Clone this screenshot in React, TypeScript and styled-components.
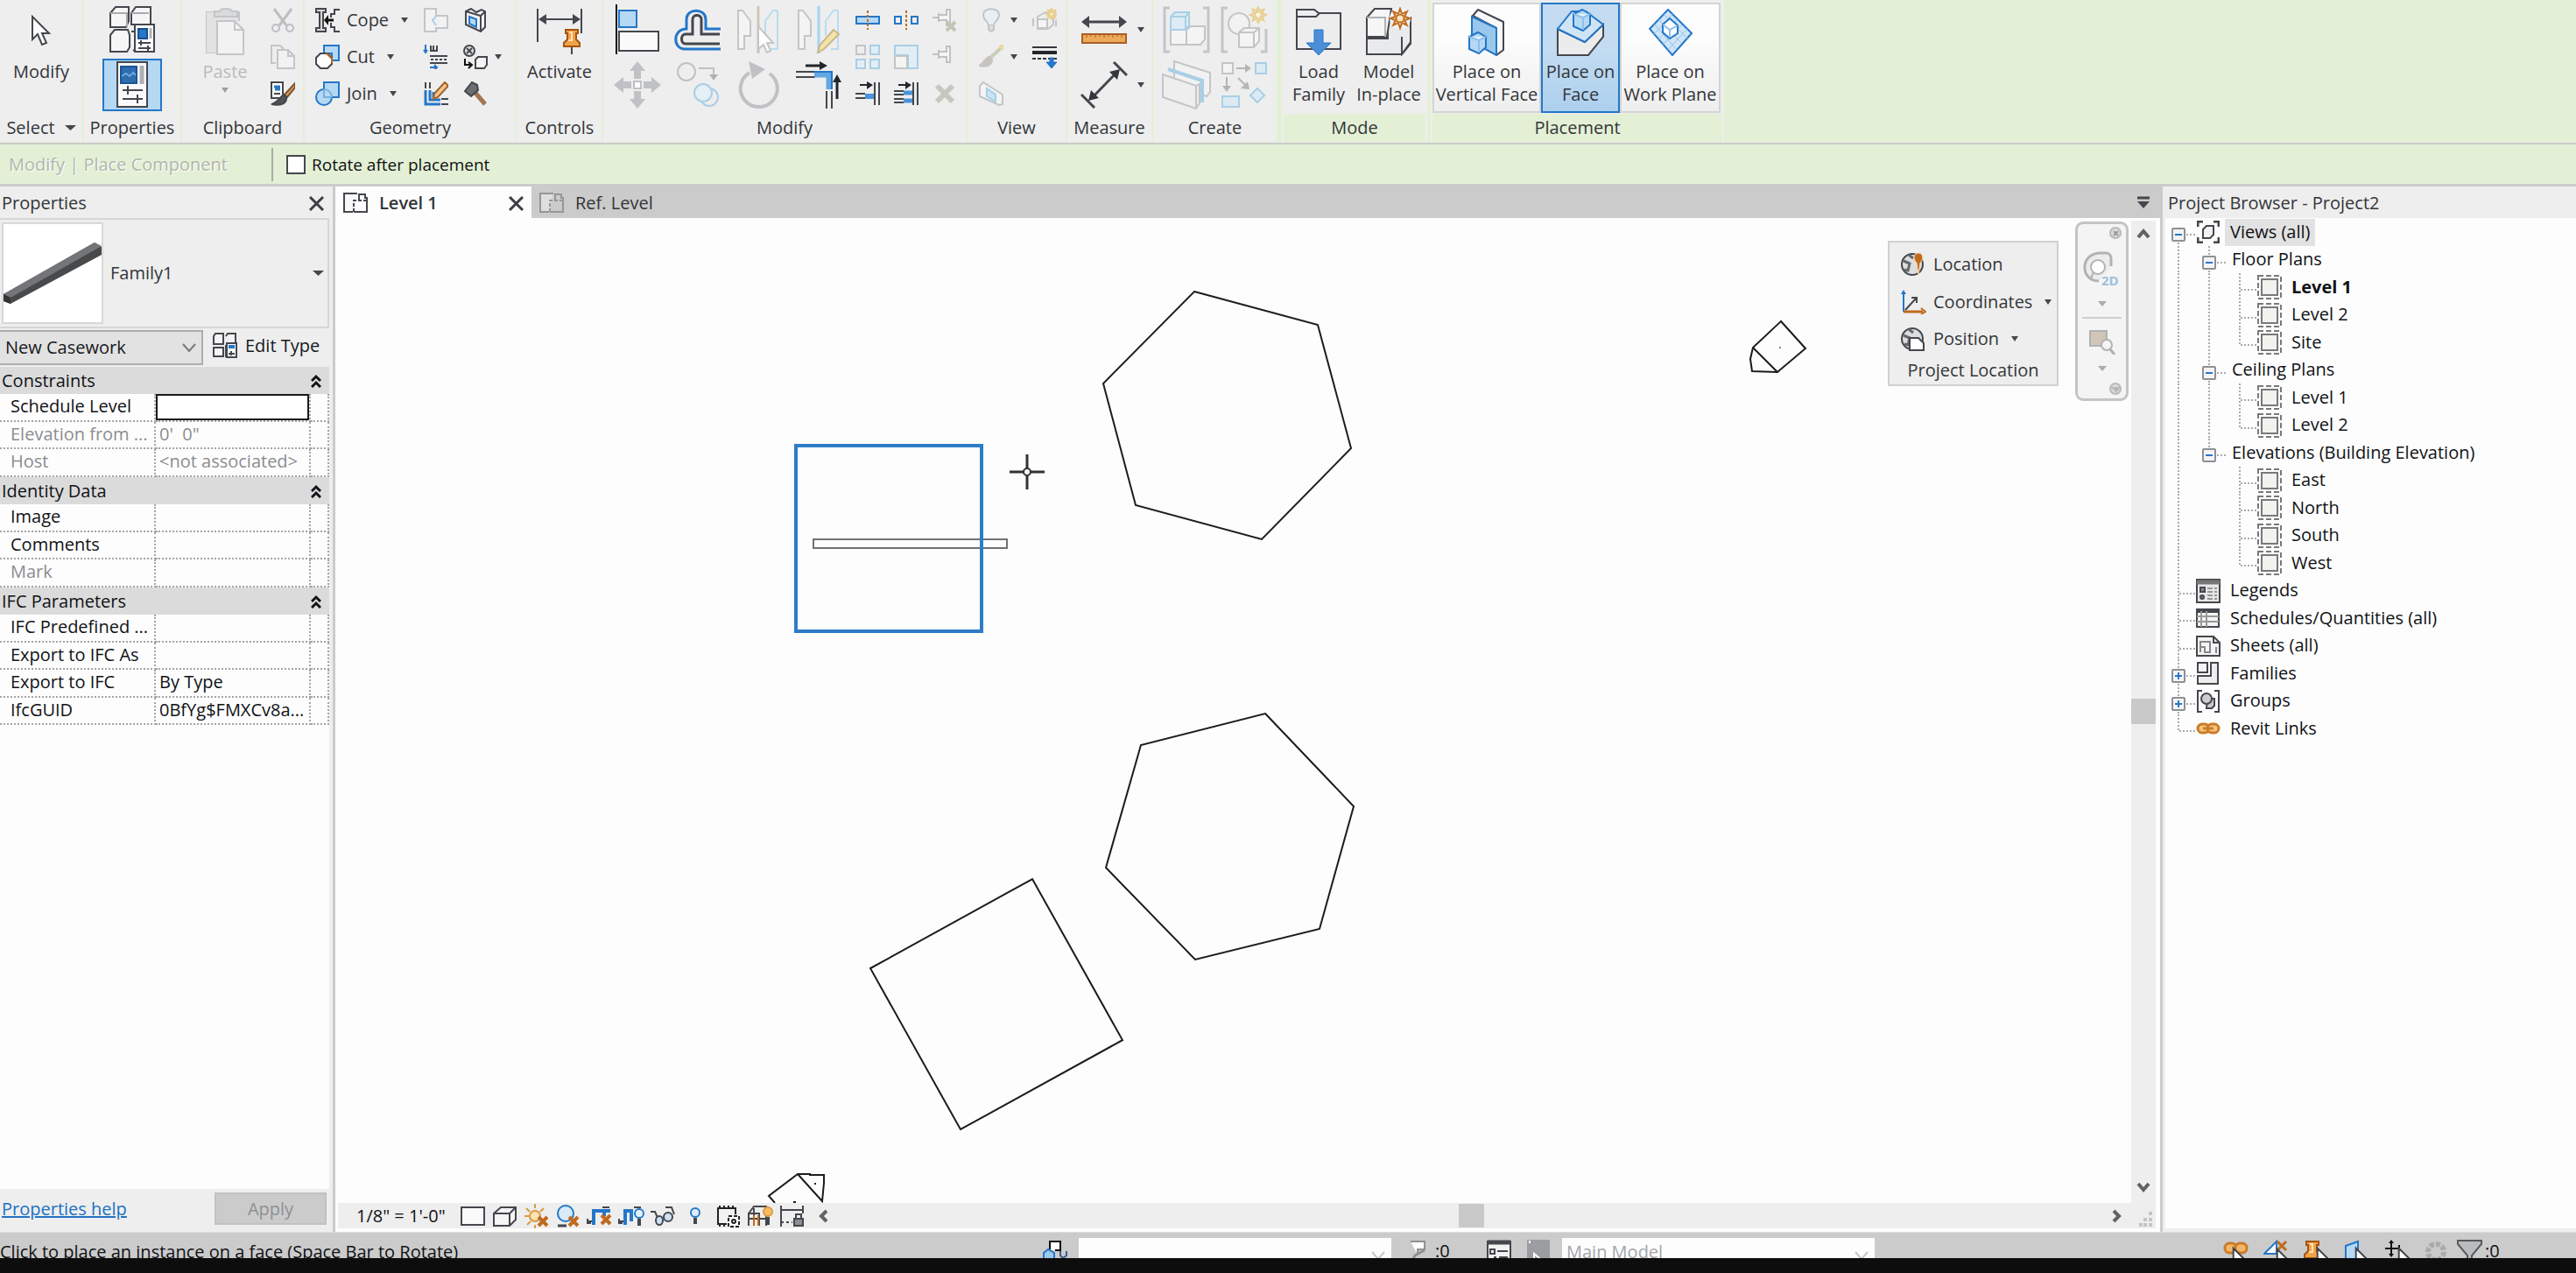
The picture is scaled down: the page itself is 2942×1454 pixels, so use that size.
import React from 'react';
import styled, { createGlobalStyle, css } from 'styled-components';

const GREEN = '#e3f0d6';
const PANEL = '#eeeeee';
const GRAY = '#cbcbcb';
const INK = '#44474d';
const BLUE = '#2477c9';
const SKY = '#b5d8f3';
const ORANGE = '#c06a1e';
const FADE = '#c3c5c8';
const FADEBLUE = '#a9cfe6';

const Global = createGlobalStyle`
  * { box-sizing: border-box; }
  body { margin: 0; background: #0d0d0d; }
  button, input, select { font: inherit; color: inherit; margin: 0; }
  button { background: none; border: 0; padding: 0; }
  svg { display: block; flex: none; }
`;

const Page = styled.div`
  display: flex;
  flex-direction: column;
  height: 100vh;
  overflow: hidden;
  font: 400 20px/26px 'Open Sans', 'Noto Sans', sans-serif;
  color: #333639;
`;

/* ---------- ribbon ---------- */
const Ribbon = styled.header`
  display: flex;
  flex: none;
  height: 165px;
  background: ${GREEN};
  border-bottom: 2px solid ${GRAY};
`;
const PanelBox = styled.section<{ $w: number; $tab?: boolean }>`
  display: flex;
  flex-direction: column;
  flex: none;
  width: ${p => p.$w}px;
  height: 162px;
  background: ${p => (p.$tab ? GREEN : PANEL)};
  border-right: 2px solid ${p => (p.$tab ? PANEL : GREEN)};
  ${p => p.$tab && css`margin-left: 4px; border-left: 2px solid ${PANEL};`}
`;
const PanelBody = styled.div<{ $pad?: number }>`
  display: flex;
  height: 130px;
  padding: 2px 0 0 ${p => p.$pad ?? 0}px;
  background: ${PANEL};
`;
const PanelTitle = styled.div`
  display: flex;
  justify-content: center;
  align-items: center;
  gap: 11px;
  height: 31px;
`;
const BigButton = styled.button<{ $w: number; $off?: boolean }>`
  display: flex;
  flex-direction: column;
  align-items: center;
  width: ${p => p.$w}px;
  color: ${p => (p.$off ? '#b9bbbd' : 'inherit')};
`;
const BigIcon = styled.span`
  display: flex;
  align-items: center;
  justify-content: center;
  height: 67px;
`;
const BigText = styled.span`padding-bottom: 5px;`;
const Col = styled.div<{ $w?: number }>`
  display: flex;
  flex-direction: column;
  ${p => p.$w && css`width: ${p.$w}px;`}
`;
const Small = styled.button<{ $h?: number }>`
  display: flex;
  align-items: center;
  gap: 8px;
  height: ${p => p.$h ?? 42}px;
`;
const SmallIcon = styled.span<{ $w?: number }>`
  display: flex;
  justify-content: center;
  width: ${p => p.$w ?? 28}px;
`;
const SmallText = styled.span`padding-right: 6px;`;
const Tile = styled.button<{ $on?: boolean }>`
  display: flex;
  align-items: center;
  justify-content: center;
  align-self: center;
  width: 68px;
  height: ${p => (p.$on ? 60 : 62)}px;
  margin-top: ${p => (p.$on ? 3 : 0)}px;
  ${p => p.$on && css`background: ${SKY}; border: 2px solid ${BLUE};`}
`;
const Choices = styled.div`display: flex; margin-top: 1px; height: 126px;`;
const Choice = styled.button<{ $w: number; $on?: boolean }>`
  display: flex;
  flex-direction: column;
  align-items: center;
  width: ${p => p.$w}px;
  white-space: nowrap;
  background: ${p => (p.$on ? 'linear-gradient(#c3dcf1 40%, #acd0ee)' : 'linear-gradient(#fdfdfd 30%, #eeeeee)')};
  border: 2px solid ${p => (p.$on ? BLUE : '#d4d4d4')};
`;
const ChoiceIcon = styled(BigIcon)`height: 64px;`;

const Options = styled.div`
  display: flex;
  align-items: center;
  flex: none;
  height: 48px;
  background: ${GREEN};
  border-bottom: 3px solid ${GRAY};
  font-size: 19px;
  color: #111;
`;
const Mode = styled.div`
  width: 310px;
  padding-left: 10px;
  font-size: 20px;
  color: #b1b5ad;
  text-shadow: 1px 1px 0 #fff;
`;
const Rule = styled.div`width: 2px; height: 38px; margin-right: 15px; background: #a9aca6;`;
const Check = styled.label`
  display: flex;
  align-items: center;
  gap: 7px;
  input { appearance: none; width: 22px; height: 22px; border: 2px solid #44474d; background: #fff; }
`;

/* ---------- docked area ---------- */
const Main = styled.main`display: flex; flex: 1; min-height: 0;`;
const Splitter = styled.div`flex: none; width: 3px; background: ${GRAY};`;
const Props = styled.aside`
  display: flex;
  flex-direction: column;
  flex: none;
  width: 380px;
  background: ${PANEL};
  padding-right: 4px;
`;
const DockTitle = styled.h2`
  display: flex;
  justify-content: space-between;
  align-items: center;
  margin: 0;
  padding: 2px 6px 0 2px;
  height: 36px;
  font-size: 20px;
  font-weight: 400;
`;
const TypePicker = styled.button`
  display: flex;
  align-items: center;
  gap: 8px;
  height: 126px;
  padding: 0 4px 0 2px;
  border: 2px solid #d6d6d6;
  border-left: 0;
  text-align: left;
`;
const TypeName = styled.span`flex: 1;`;
const Thumb = styled.span`border: 2px solid #d8d8d8; background: #fff;`;
const FilterRow = styled.div`
  display: flex;
  align-items: center;
  gap: 10px;
  height: 44px;
  color: #16181b;
`;
const SelectWrap = styled.div`
  display: flex;
  align-items: center;
  width: 232px;
  height: 40px;
  border: 2px solid #adadad;
  border-left: 0;
  background: #e2e2e2;
  select { flex: 1; appearance: none; border: 0; background: none; height: 100%; padding: 0 0 0 6px; }
  svg { margin-right: 6px; }
`;
const EditType = styled.button`
  display: flex;
  align-items: center;
  gap: 8px;
  padding-bottom: 4px;
`;
const GridArea = styled.div`flex: 1; background: #fdfdfd;`;
const PropTable = styled.table`
  width: 100%;
  border-collapse: separate;
  border-spacing: 0;
  table-layout: fixed;
  line-height: 26px;
  color: #101216;
`;
const GroupHead = styled.th`
  height: 31px;
  padding: 0 9px 0 2px;
  background: #dbdbdb;
  font-weight: 400;
  text-align: left;
`;
const HeadRow = styled.span`display: flex; justify-content: space-between; align-items: center;`;
const PropRow = styled.tr`
  height: 32px;
  &:nth-child(odd) { height: 31px; }
`;
const Cell = styled.td<{ $off?: boolean; $label?: boolean }>`
  padding: 0 0 2px ${p => (p.$label ? 12 : 4)}px;
  border-right: 2px dotted #a5a5a5;
  border-bottom: 2px dotted #a5a5a5;
  overflow: hidden;
  white-space: nowrap;
  text-overflow: ellipsis;
  color: ${p => (p.$off ? '#8b8d90' : 'inherit')};
`;
const EditCell = styled(Cell)`
  padding: 0;
  input { display: block; width: 100%; height: 30px; border: 2px solid #1a1a1a; background: #fff; }
`;
const PropsFoot = styled.div`
  display: flex;
  justify-content: space-between;
  align-items: center;
  height: 49px;
  padding: 0 3px 4px 2px;
`;
const Link = styled.a`color: #2072c4;`;
const Apply = styled.button`
  width: 128px;
  height: 37px;
  border: 2px solid #bfc1c3;
  background: ${GRAY};
  color: #8e9093;
`;

/* ---------- document ---------- */
const Doc = styled.section`
  display: flex;
  flex-direction: column;
  flex: 1;
  min-width: 0;
  background: #fdfdfd;
`;
const Tabs = styled.nav`
  display: flex;
  flex: none;
  height: 36px;
  background: ${GRAY};
`;
const Tab = styled.button<{ $on?: boolean }>`
  display: flex;
  align-items: center;
  gap: 13px;
  padding: 2px 9px 0;
  ${p => p.$on && css`width: 224px; background: #fdfdfd; font-weight: 600;`}
  & > span { flex: 1; text-align: left; }
`;
const TabMenu = styled.button`margin-left: auto; padding-right: 11px;`;
const Stage = styled.div`display: flex; flex: 1; min-height: 0;`;
const Canvas = styled.div`
  position: relative;
  flex: 1;
  min-width: 0;
  overflow: hidden;
`;
const Drawing = styled.svg`position: absolute; inset: 0;`;
const LocationPanel = styled.div`
  position: absolute;
  top: 26px;
  right: 83px;
  width: 195px;
  height: 166px;
  padding: 2px 0 0 12px;
  background: ${PANEL};
  border: 2px solid #d0d0d0;
`;
const LocationTitle = styled.div`padding-right: 12px; text-align: center; line-height: 30px;`;
const NavBar = styled.div`
  position: absolute;
  top: 4px;
  right: 3px;
  display: flex;
  flex-direction: column;
  align-items: center;
  justify-content: space-between;
  width: 61px;
  height: 205px;
  padding: 3px 4px;
  border: 3px solid #c4c4c4;
  border-radius: 9px;
  background: #f4f4f4;
`;
const NavEnd = styled.button`align-self: flex-end;`;
const NavRule = styled.div`width: 45px; height: 2px; background: #cfcfcf;`;
const VScroll = styled.div`
  display: flex;
  flex-direction: column;
  align-items: center;
  justify-content: space-between;
  width: 28px;
  margin: 3px 5px 0 0;
  padding: 8px 0 10px;
  background: ${PANEL};
`;
const VThumb = styled.div`width: 28px; height: 29px; background: #c9c9c9;`;
const ViewBar = styled.div`
  display: flex;
  align-items: center;
  flex: none;
  height: 29px;
  margin: 0 5px 4px 3px;
  padding-left: 21px;
  background: ${PANEL};
  color: #101216;
`;
const Scale = styled.button`width: 114px; text-align: left;`;
const ViewTool = styled.button<{ $wide?: boolean }>`
  display: flex;
  justify-content: center;
  width: ${p => (p.$wide ? 37 : 36)}px;
`;
const HTrack = styled.div`display: flex; flex: 1; justify-content: center; padding-right: 8px;`;
const HThumb = styled.div`width: 29px; height: 27px; background: #c9c9c9;`;
const Corner = styled.div`padding: 8px 4px 0 18px;`;

/* ---------- browser ---------- */
const Browser = styled.aside`
  display: flex;
  flex-direction: column;
  flex: none;
  width: 472px;
  background: ${PANEL};
  padding: 0 0 4px;
`;
const BrowserTitle = styled(DockTitle)`padding-left: 6px;`;
const Tree = styled.ul`
  flex: 1;
  margin: 0 0 0 3px;
  padding: 0;
  list-style: none;
  background: #fdfdfd;
  color: #101216;
`;
const TreeRow = styled.li`
  display: flex;
  align-items: center;
  height: 31px;
  &:nth-child(odd) { height: 32px; }
`;
const TreeIcon = styled.span`
  display: flex;
  flex: none;
  justify-content: center;
  width: 28px;
  margin-right: 5px;
`;
const TreeText = styled.span<{ $sel?: boolean; $bold?: boolean }>`
  height: 31px;
  padding: 0 ${p => (p.$sel ? 6 : 0)}px 0 6px;
  line-height: 29px;
  background: ${p => (p.$sel ? '#e2e2e2' : 'none')};
  font-weight: ${p => (p.$bold ? 700 : 400)};
`;

/* ---------- status ---------- */
const Status = styled.footer`
  display: flex;
  flex: none;
  align-items: flex-start;
  height: 30px;
  overflow: hidden;
  background: ${GRAY};
  border-top: 1px solid #dcdcdc;
  color: #101216;
`;
const Hint = styled.div`width: 1190px; padding-top: 9px; white-space: nowrap;`;
const StatusItem = styled.button<{ $w: number; $pad?: number }>`
  display: flex;
  gap: 2px;
  flex: none;
  width: ${p => p.$w}px;
  padding: 8px 0 0 ${p => p.$pad ?? 0}px;
`;
const Combo = styled.div`
  display: flex;
  align-items: center;
  width: 357px;
  height: 40px;
  margin-top: 6px;
  background: #fdfdfd;
  color: #a3a6aa;
  select { flex: 1; height: 40px; appearance: none; border: 0; background: none; padding: 0 0 8px 5px; }
  svg { margin: 0 7px 0 0; }
`;
const RightTools = styled.div`display: flex; margin-left: auto; padding-right: 86px;`;
const Strip = styled.div`flex: none; height: 17px; background: #0d0d0d;`;

/* ---------- icons ---------- */
type IcoProps = { w: number; h: number; c?: string; s?: number; children: React.ReactNode };
const Ico = ({ w, h, c = INK, s = 2, children }: IcoProps) => (
  <svg width={w} height={h} viewBox={`0 0 ${w} ${h}`} fill="none" stroke={c} strokeWidth={s} aria-hidden="true">{children}</svg>
);
const Tri = ({ c = INK, w = 10 }: { c?: string; w?: number }) => (
  <svg width={w} height={6} viewBox="0 0 10 6" preserveAspectRatio="none" aria-hidden="true"><path d="M0 0h10L5 6z" fill={c} /></svg>
);
const Close = ({ w = 17 }) => <Ico w={w} h={17} c="#3b3e42" s={3}><path d="M1 1l15 15M16 1L1 16" /></Ico>;
const Chevron = ({ d, c = '#5f6266' }: { d: 'u' | 'd' | 'l' | 'r'; c?: string }) => {
  const p = { u: 'M2 11l6-7 6 7', d: 'M2 4l6 7 6-7', l: 'M11 2L5 8l6 6', r: 'M5 2l6 6-6 6' }[d];
  return <Ico w={16} h={16} c={c} s={4}><path d={p} /></Ico>;
};
const ThinChevron = ({ c = '#77797c' }) => <Ico w={16} h={12} c={c}><path d="M1 2l7 8 7-8" /></Ico>;
const DoubleUp = () => <Ico w={12} h={16} c="#101216" s={3}><path d="M1 8l5-5 5 5M1 15l5-5 5 5" /></Ico>;
const Cursor = ({ x = 0, y = 0, k = 1 }) => (
  <path transform={`translate(${x} ${y}) scale(${k})`} d="M1 1v26l6-6 5 12 5-2-5-11h8z" fill="#fff" stroke={INK} strokeWidth={2 / k} />
);
const Burst = ({ x, y, r, faded }: { x: number; y: number; r: number; faded?: boolean }) => {
  const c = faded ? '#e8cf90' : ORANGE;
  return (
    <g stroke={c} strokeWidth="2">
      {[0, 45, 90, 135, 180, 225, 270, 315].map(a => (
        <path key={a} transform={`rotate(${a} ${x} ${y})`} d={`M${x - 2} ${y - r * 0.5}L${x} ${y - r}L${x + 2} ${y - r * 0.5}`} />
      ))}
      <circle cx={x} cy={y} r={r * 0.42} fill={faded ? '#fbf3dc' : '#fbe3c0'} />
    </g>
  );
};
const Cross = ({ x, y, r = 5, c = ORANGE, s = 4 }: { x: number; y: number; r?: number; c?: string; s?: number }) => (
  <path d={`M${x - r} ${y - r}l${2 * r} ${2 * r}M${x + r} ${y - r}l${-2 * r} ${2 * r}`} stroke={c} strokeWidth={s} />
);

const TypePropsIcon = () => (
  <Ico w={54} h={54}>
    <path d="M2 9l6-7h15v16l-3 7H2zM26 9l5-7h17v20H26zM2 34l5-6h15l2 6v14l-3 5H2zM26 30h6v19l-4 3" fill="#f6f6f6" />
    <path d="M2 9h19v16M26 9h20" stroke="#a9abae" />
    <rect x="30" y="22" width="22" height="31" fill="#fff" />
    <rect x="34" y="27" width="10" height="11" fill={BLUE} stroke="#174f8c" />
    <path d="M48 26v12" stroke="#b0b2b5" strokeWidth="3" /><path d="M34 43h14M37 40v6M34 49h14M45 46v6" stroke={INK} />
  </Ico>
);
const PropsIcon = () => (
  <Ico w={38} h={54}>
    <rect x="2" y="1" width="34" height="51" fill="#fafafa" />
    <rect x="6" y="6" width="18" height="19" fill="#2e6db0" stroke="#1d5494" /><path d="M7 17l5-3 4 3 4-4 3 3" stroke="#6da8de" />
    <path d="M30 5v21" stroke="#adb0b4" strokeWidth="5" />
    <path d="M8 33h23M14 28v10M8 43h23M25 38v10" />
  </Ico>
);
const PasteIcon = () => (
  <Ico w={46} h={54} c={FADE}>
    <path d="M13 5H2v46h12M32 5h7v10" fill="#e2e2e2" /><path d="M2 5h36v10H14v36H2z" fill="#e2e2e2" stroke="none" />
    <path d="M11 8V4h6c1-4 13-4 14 0h6v6H11z" fill="#d9dadb" /><path d="M14 15h20l10 10v28H14z" fill="#f2f2f2" /><path d="M34 15v10h10" />
  </Ico>
);
const CutIcon = () => (
  <Ico w={28} h={28} c="#bcbec1"><path d="M4 1l14 19M24 1L10 20" strokeWidth="3" /><circle cx="6" cy="23" r="4" /><circle cx="22" cy="23" r="4" /></Ico>
);
const CopyIcon = () => (
  <Ico w={28} h={28} c={FADE}><path d="M6 21H1V1h10l4 4" /><path d="M8 6h12l7 7v14H8zM20 6v7h7" fill="#f2f2f2" /></Ico>
);
const MatchIcon = () => (
  <Ico w={28} h={28}>
    <path d="M11 19H1V1h13v14" fill="#fff" /><path d="M4 6h7M5 9h6" stroke={BLUE} strokeWidth="3" /><path d="M4 14h7" />
    <path d="M28 2L16 15l3 3 9-11z" fill="#e0a060" stroke="#7c5430" /><path d="M15 15c-5 3-6 9-14 11 9 2 18 0 17-8z" fill="#4f5357" />
  </Ico>
);
const CopeIcon = () => (
  <Ico w={28} h={28}>
    <path d="M1 1h11v4H9v18h3v4H1v-4h4V5H1z" fill="#d5d5d5" /><path d="M12 14h9" stroke="#111" strokeWidth="3" /><path d="M15 8l-5 6 5 6z" fill="#111" stroke="none" />
    <path d="M28 2h-6v5h-4v4M18 17v5h4v5h6" />
  </Ico>
);
const CutGeoIcon = () => (
  <Ico w={28} h={28} c={BLUE}><path d="M10 1h17v17h-8V10h-9z" fill={SKY} /><path d="M6 10h8l5 5v7l-5 5H6l-5-5v-7z" fill="#fff" stroke={INK} /><path d="M13 10l6 6v5" stroke={ORANGE} /></Ico>
);
const JoinGeoIcon = () => (
  <Ico w={28} h={28} c={BLUE}><path d="M10 1h17v17h-8c0 5-4 9-9 9s-9-4-9-9 4-9 9-9z" fill={SKY} /><path d="M10 9v9h9M10 9c5 0 9 4 9 9" stroke="#77b0e0" /></Ico>
);
const JoinFaded = () => <Ico w={28} h={28} c={FADE}><path d="M1 1h13v8h13v14H14v4H1z" fill="#f2f2f2" /><path d="M14 10l-4 4 4 6" stroke={FADEBLUE} /></Ico>;
const WallJoin = () => <Ico w={30} h={28} c={BLUE}><path d="M3 0v8M1 6l2 3 2-3M8 26h8M13 23l3 3-3 3" /><path d="M9 1v6h7V1M12 1v6M8 13h20M8 21h20" stroke={INK} /><path d="M9 17h18" stroke={INK} strokeDasharray="3 2" /></Ico>;
const EditJoin = () => <Ico w={28} h={28}><path d="M2 1v7M7 1v7M20 20h8M20 26h8" /><path d="M2 10v16h17M7 10v11h12M11 12v5h6" stroke={BLUE} strokeWidth="3" /><path d="M24 1l4 4-12 13-5 2 1-6z" fill="#f5c690" stroke="#a0622a" /></Ico>;
const FaceIcon = () => <Ico w={26} h={28}><path d="M2 4l6-3 6 4 6-3 4 2v18l-5 5L2 19z" fill="#f4f4f4" /><path d="M19 9v17M2 4l17 5 5-5" /><path d="M6 10l8 3v9l-8-4z" fill={SKY} stroke={BLUE} /></Ico>;
const SplitFace = () => <Ico w={28} h={28}><circle cx="7" cy="7" r="6" fill="#ddd" /><path d="M4 4l6 6M10 4l-6 6" /><path d="M2 16v7h7M6 20l4 3-4 4" stroke="#111" /><path d="M14 17l3-3h10v9l-3 4H14z" fill="#f4f4f4" /></Ico>;
const Hammer = () => <Ico w={28} h={28}><path d="M13 12l12 14" stroke="#a3744f" strokeWidth="5" /><path d="M2 11L10 1l6 3 1 6-8 7z" fill="#6b6e72" /></Ico>;
const Pin = ({ x = 0, y = 0, k = 1 }) => (
  <g transform={`translate(${x} ${y}) scale(${k})`}><path d="M10 20v9" stroke={INK} /><path d="M3 1h14v4h-2v7l4 4v4H1v-4l4-4V5H3z" fill="#f1a34a" stroke="#a65310" /><path d="M7 4h3v9H6" stroke="#ffe2b8" /></g>
);
const ActivateIcon = () => (
  <Ico w={54} h={54}><path d="M2 1v38M52 1v28M4 13h46" /><path d="M3 13l9-6v12zM51 13l-9-6v12z" fill={INK} stroke="none" /><Pin x={31} y={24} /></Ico>
);
const AlignIcon = () => (
  <Ico w={52} h={58}><path d="M2 0v57" stroke="#111" /><rect x="5" y="7" width="20" height="19" fill={SKY} stroke={BLUE} /><rect x="5" y="31" width="45" height="22" fill="#fafafa" stroke={INK} /></Ico>
);
const OffsetIcon = () => (
  <Ico w={54} h={48} s={3}><path d="M53 23H36V12c0-13-22-13-22 0v11C-2 23-2 46 12 46h41" stroke={BLUE} /><path d="M52 29H31V12c0-6-10-6-10 0v17h-8c-6 0-6 11 0 11h39" /></Ico>
);
const MirrorPick = ({ pencil }: { pencil?: boolean }) => (
  <Ico w={50} h={54} c={FADE}>
    <path d="M2 5h5l9 12v17h-7v15H2z" fill="#f4f4f4" /><path d="M47 5h-5l-9 12v17M47 5v44h-8" stroke="#b9dcef" />
    <path d="M25 0v54" stroke={pencil ? '#a5d3ef' : '#d2c6b4'} strokeWidth="3" />
    {pencil ? <path d="M42 27l6 5-17 17-7 4 2-8z" fill="#f6e3a8" stroke="#c7b98f" /> : <path d="M25 23v26l6-5 4 9 4-2-4-9h7z" fill="#fff" />}
  </Ico>
);
const MoveIcon = () => (
  <Ico w={54} h={54}><path d="M27 0l9 11h-5v9h-8v-9h-5zM27 54l9-11h-5v-9h-8v9h-5zM0 27l11-9v5h9v8h-9v5zM54 27l-11-9v5h-9v8h9v5z" fill="#bfc1c4" stroke="none" /><rect x="23" y="23" width="8" height="8" fill="#fff" stroke="#bfc1c4" /></Ico>
);
const CopyTool = () => (
  <Ico w={50} h={54} c="#bfc1c4"><circle cx="12" cy="12" r="10" /><path d="M26 8h17v8" /><path d="M38 15l5 7 5-7z" fill="#aeb0b3" stroke="none" /><circle cx="38" cy="41" r="10" stroke={FADEBLUE} /><circle cx="31" cy="36" r="10" fill="#e4eff6" stroke={FADEBLUE} /></Ico>
);
const RotateIcon = () => (
  <Ico w={48} h={54} s={4} c="#bfc1c4"><path d="M14 13A21 21 0 1 0 37 14" /><path d="M13 0l19 9-15 11z" fill="#bfc1c4" stroke="none" /></Ico>
);
const TrimIcon = () => (
  <Ico w={54} h={54}>
    <path d="M12 5h18M48 43V22" stroke="#23262b" strokeWidth="3" /><path d="M28 0l9 5-9 5zM43 24l5-9 5 9z" fill="#23262b" stroke="none" />
    <path d="M1 12h22M1 18h22M36 34v20M42 34v20" /><path d="M22 15h17v17" stroke="#63a8e2" strokeWidth="7" /><path d="M22 12h20v20" stroke={BLUE} />
  </Ico>
);
const SplitIcon = ({ gap }: { gap?: boolean }) => (
  <Ico w={28} h={22} c={BLUE}>{gap ? <><rect x="1" y="7" width="7" height="8" /><rect x="20" y="7" width="7" height="8" /></> : <rect x="1" y="7" width="26" height="8" fill={SKY} />}<path d="M14 0v22" stroke={ORANGE} strokeDasharray="3 2" /></Ico>
);
const PinFaded = ({ x }: { x?: boolean }) => (
  <Ico w={28} h={28} c="#bfc1c4"><path d="M0 11h7M7 6v10M7 8h9V2h4v18h-4v-6H7" fill="#f4f4f4" />{x && <Cross x={21} y={21} r={5} c="#c3c6b4" />}</Ico>
);
const ArrayIcon = () => (
  <Ico w={28} h={28} c={FADEBLUE}><rect x="1" y="1" width="10" height="10" stroke={FADE} /><rect x="17" y="1" width="10" height="10" fill="#e2eef5" /><rect x="1" y="17" width="10" height="10" fill="#e2eef5" /><rect x="17" y="17" width="10" height="10" fill="#e2eef5" /></Ico>
);
const ScaleIcon = () => <Ico w={28} h={28} c={FADEBLUE}><path d="M1 1h26v26H16V12H1z" fill="#e2eef5" /><rect x="1" y="13" width="14" height="14" fill="#f4f4f4" stroke={FADE} /></Ico>;
const TrimOne = ({ two }: { two?: boolean }) => (
  <Ico w={28} h={28}>
    <path d="M22 1v26M27 1v26" />
    {two ? <path d="M0 11h11M0 15h11M0 20h11M0 24h11" /> : <path d="M0 14h11M0 19h11" />}
    {two ? <path d="M11 13h10M11 22h10" stroke="#4a94da" strokeWidth="5" /> : <path d="M11 17h10" stroke="#4a94da" strokeWidth="6" />}
    <path d="M5 4h10" stroke="#23262b" /><path d="M13 0l7 4-7 5z" fill="#23262b" stroke="none" />
  </Ico>
);
const DeleteIcon = () => <Ico w={26} h={24}><Cross x={13} y={12} r={9} c="#c6c8bd" s={6} /></Ico>;
const Bulb = () => <Ico w={28} h={28} c={FADE}><path d="M11 20c0-5-6-5-6-12 0-9 18-9 18 0 0 7-6 7-6 12z" fill="#e6f0f5" /><path d="M11 20v5l3 2 3-2v-5" fill="#ddd" /></Ico>;
const BrushFaded = () => <Ico w={28} h={28} c={FADE}><path d="M25 4L12 16" stroke="#c9cbbb" strokeWidth="4" /><circle cx="26" cy="3" r="2" fill="#f5e4a0" stroke="#e6d79c" /><path d="M11 14c-5 2-5 8-11 10 8 2 15 0 15-7z" fill="#c9c1b8" /></Ico>;
const HideBox = () => <Ico w={28} h={28} c={FADE}><path d="M6 10l9-5 9 4v10l-6 5H6z" /><rect x="6" y="13" width="11" height="10" fill="#f4f4f4" /><path d="M1 12v9M27 14v7" /><Burst x={22} y={7} r={6} faded /></Ico>;
const LinesIcon = () => <Ico w={28} h={26}><path d="M0 2h28" stroke="#33363c" /><path d="M0 8h28" stroke="#23262b" strokeWidth="4" /><path d="M0 15h28" stroke="#33363c" strokeDasharray="4 2" /><path d="M20 14h4v5h4l-6 7-6-7h4z" fill={BLUE} stroke={BLUE} strokeWidth="1" /></Ico>;
const SectionBox = () => <Ico w={28} h={28} c={FADE}><path d="M1 5l4-4 22 14v11l-4 1L1 17z" fill="#f4f4f4" /><path d="M9 8l10 7v8L9 17z" fill="#cbe4f5" stroke={FADEBLUE} /></Ico>;
const MeasureIcon = () => (
  <Ico w={52} h={32}><path d="M6 7h40" strokeWidth="3" /><path d="M0 7l9-7v14zM52 7l-9-7v14z" fill={INK} stroke="none" /><rect x="1" y="21" width="50" height="10" fill="#efa95a" stroke="#a85f22" /><path d="M6 21v4M11 21v3M16 21v4M21 21v3M26 21v4M31 21v3M36 21v4M41 21v3M46 21v4" stroke="#a85f22" strokeWidth="1" /></Ico>
);
const AlignedDim = () => <Ico w={54} h={54}><path d="M12 43L42 12M38 1l15 15M1 38l15 15" strokeWidth="3" /><path d="M9 45l3-12 9 9zM45 9l-3 12-9-9z" fill="#33363b" stroke="none" /></Ico>;
const CreateGroup = () => (
  <Ico w={54} h={54} c={FADE}><path d="M8 2H2v50h6M46 2h6v50h-6" strokeWidth="3" /><path d="M9 27h18v17H9zM27 27l5-4h16v15l-5 6H27z" fill="#f4f4f4" /><path d="M9 12l5-5h16v15l-4 5H9z" fill="#dcebf5" stroke={FADEBLUE} /><path d="M9 12h17v14M26 12l4-5" stroke={FADEBLUE} /></Ico>
);
const CreateSimilar = () => (
  <Ico w={54} h={54} c={FADE}><path d="M8 2H2v50h6M46 52h6V26" strokeWidth="3" /><circle cx="21" cy="20" r="12" fill="#f2f2f2" /><path d="M21 30l6-5h17v15l-6 7H21z" fill="#f4f4f4" /><path d="M21 30h17v16M38 30l6-5" /><Burst x={43} y={10} r={9} faded /></Ico>
);
const AssemblyIcon = () => (
  <Ico w={56} h={56} c={FADE}><path d="M14 1l41 13v22l-4 5L14 27z" fill="#f2f2f2" /><path d="M7 10l39 13v25" stroke={FADEBLUE} strokeWidth="4" /><path d="M1 16l38 13 4-2v22l-4 6L1 42z" fill="#eee" /><path d="M39 29v25" /></Ico>
);
const PartsIcon = () => (
  <Ico w={54} h={54} c="#b3b5b8"><rect x="2" y="2" width="12" height="12" stroke={FADE} fill="#f4f4f4" /><path d="M18 8h12M7 18v12M20 19l9 9" /><path d="M28 3l7 5-7 5zM2 28l5 7 5-7zM33 32l-10-1 8-8z" fill="#b3b5b8" stroke="none" /><rect x="40" y="2" width="12" height="12" fill="#dcebf3" stroke={FADEBLUE} /><rect x="2" y="40" width="19" height="12" fill="#dcebf3" stroke={FADEBLUE} /><path d="M42 31l8 8-8 8-8-8z" fill="#dcebf3" stroke={FADEBLUE} /></Ico>
);
const LoadIcon = () => (
  <Ico w={54} h={54}><path d="M2 2h20l5 4h25v41H2z" fill="#ededee" /><path d="M2 10h22l4-4" /><path d="M22 25h10v15h9L27 54 13 40h9z" fill="#4c8fd6" stroke={BLUE} strokeWidth="1" /></Ico>
);
const InPlaceIcon = () => (
  <Ico w={54} h={56}><path d="M2 36h24V12h26v28L42 54H2z" fill="#e8eaec" /><path d="M2 12L11 2h19l-5 32H2z" fill="#f6f6f6" /><path d="M2 12h21v22" stroke="#b0b2b5" /><path d="M52 26v16L42 54V34" /><circle cx="40" cy="13" r="12" fill="#f3f3f3" stroke="none" /><Burst x={40} y={13} r={11} /></Ico>
);
const Cube = ({ x, y }: { x: number; y: number }) => (
  <g transform={`translate(${x} ${y})`} stroke={BLUE}><path d="M1 6l10-5 9 5v12l-8 7-11-5z" fill={SKY} /><path d="M1 6l11 4 8-4" fill="#e8f4fc" stroke="#8cc0ea" /><path d="M12 10v14" stroke="#8cc0ea" /></g>
);
const VertFace = () => <Ico w={42} h={54}><path d="M5 8l6-7 29 14v32l-8 6V22z" fill="#f8f8f8" /><path d="M4 9l28 13v31L4 38z" fill="#9ac7ec" stroke={BLUE} /><Cube x={0} y={26} /></Ico>;
const OnFace = () => <Ico w={54} h={54}><path d="M1 23l31 15 21-20v14L36 53H1z" fill="#ececec" /><path d="M1 23L17 3h16l20 15-21 20z" fill="#cfe5f6" stroke={BLUE} /><Cube x={18} y={0} /></Ico>;
const OnPlane = () => <Ico w={50} h={54} c={BLUE}><path d="M22 1l27 27-22 25L1 23z" fill="#cfe5f7" /><path d="M6 17l26 30M11 12l27 28M17 6l27 28M27 6L6 29M33 12L11 35M38 18L16 41M44 23L22 47" stroke="#8fc1ea" strokeWidth="1" /><path d="M16 18l8-7 9 8v9l-9 6-8-7z" fill="#fff" /><path d="M24 24v9M16 18l8 6 9-5" stroke="#8cc0ea" /></Ico>;
const ViewIcon = ({ c = INK }) => <Ico w={28} h={26} c={c}><path d="M16 2H1v21h10" fill="#f4f4f4" fillOpacity="0.5" /><path d="M18 2v7M18 3h7v4h2v16H12" /><path d="M12 23V10h15" strokeDasharray="4 2" /></Ico>;
const EditTypeIcon = () => <Ico w={30} h={30}><path d="M2 4l2-3h9v12H2zM16 4l2-3h9v11M2 17h11v10H2zM16 14v14" fill="#f6f6f6" /><rect x="17" y="12" width="11" height="16" fill="#fff" /><path d="M19 16h7" stroke={BLUE} strokeWidth="4" /><path d="M22 21v5M19 24h7" /></Ico>;
const BeamPreview = () => (
  <svg width="112" height="112" viewBox="0 0 112 112" aria-label="Family preview"><path d="M0 80L104 21l8 5v9L8 91l-8-3z" fill="#48494b" /><path d="M0 80L104 21l8 4L8 84z" fill="#747578" /><path d="M0 80l8 4v7l-8-3z" fill="#343537" /></svg>
);
const Globe = ({ kind }: { kind: 'pin' | 'page' }) => (
  <Ico w={30} h={28}><circle cx="14" cy="14" r="12" fill="#ddd" /><path d="M4 10l7 3-2 8-4-1M10 3l5 4" stroke="#65686c" strokeWidth="3" />
    {kind === 'pin' ? <path d="M21 26l-2-14c-5-4-3-11 2-11s7 7 2 11z" fill={ORANGE} stroke="#f6d3ac" strokeWidth="1" /> : <path d="M11 13h10l6 6v8H11z" fill="#fff" />}
  </Ico>
);
const Axes = () => <Ico w={30} h={28}><path d="M4 2v23" stroke={BLUE} /><path d="M1 5l3-5 3 5z" fill={BLUE} stroke="none" /><path d="M4 25h22" stroke={ORANGE} strokeWidth="3" /><path d="M24 21l5 4-5 3" stroke={ORANGE} /><path d="M6 23L18 10M13 9l6 0 0 6" /></Ico>;
const Wheel = () => (
  <Ico w={46} h={44} c="#b0b2b5"><path d="M33 17V8c0-4-3-6-6-6h-8C-3 4-2 34 19 34" fill="#ececec" strokeWidth="3" /><circle cx="18" cy="18" r="8" fill="#fff" /><path d="M10 31l3-7" /><text x="22" y="39" fontFamily="Open Sans, sans-serif" fontSize="15" fontWeight="700" fill="#9dc0dc" stroke="none">2D</text></Ico>
);
const ZoomIcon = () => <Ico w={30} h={28} c="#b0b2b5"><rect x="1" y="1" width="19" height="17" fill="#cfc6b8" /><circle cx="20" cy="17" r="6" fill="#f4f4f4" /><path d="M24 22l5 6" strokeWidth="3" /></Ico>;
const Dot = ({ x }: { x?: boolean }) => <Ico w={15} h={15} c="#b7b9bb" s={2}><circle cx="7" cy="7" r="6" fill="#dadada" />{x ? <path d="M5 5l5 5M10 5l-5 5" stroke="#999" /> : <path d="M4 6h7l-3 4z" fill="#aaa" />}</Ico>;

const BoxIcon = () => <Ico w={28} h={22}><rect x="1" y="1" width="26" height="20" fill="#fafafa" /></Ico>;
const CubeIcon = () => <Ico w={28} h={24}><path d="M1 9l8-7h17v14l-7 7H1z" fill="#f6f6f6" /><path d="M1 9h18v14M19 9l7-7" /></Ico>;
const SunIcon = () => <Ico w={28} h={28} c="#d99a45"><path d="M12 0v5M2 5l4 4M0 14h5M3 24l4-4M22 5l-4 4M12 24v4" /><circle cx="12" cy="14" r="6" fill="#fbe3b5" /><Cross x={21} y={20} /></Ico>;
const ShadowIcon = () => <Ico w={28} h={26} c={BLUE}><circle cx="11" cy="10" r="9" fill="#d9ebf8" /><path d="M2 24h10" stroke={INK} strokeWidth="3" /><Cross x={20} y={19} /></Ico>;
const CropIcon = ({ bulb }: { bulb?: boolean }) => <Ico w={30} h={24}><path d="M5 20H1v-5M18 2h8M1 18h6" /><path d={bulb ? 'M8 22V6h9M15 6v12' : 'M8 22V6h19M20 6v6'} stroke={BLUE} strokeWidth="4" />{bulb ? <><circle cx="24" cy="9" r="5" fill="#e6f2fb" stroke={BLUE} /><path d="M24 15v8" strokeWidth="4" /></> : <Cross x={22} y={16} />}</Ico>;
const Glasses = () => <Ico w={28} h={24}><path d="M0 7h5l4 9M17 2h7l3 8" /><ellipse cx="10" cy="17" rx="4" ry="5" fill="#cbe2f4" /><ellipse cx="20" cy="13" rx="5" ry="5" fill="#cbe2f4" /></Ico>;
const BlueBulb = () => <Ico w={14} h={24} c={BLUE}><circle cx="7" cy="8" r="5" fill="#dceefb" /><path d="M7 14v7" stroke={INK} strokeWidth="4" /></Ico>;
const TempIcon = () => <Ico w={28} h={26} c="#222"><path d="M13 22H3V4h20v7" fill="#f2f2f2" /><path d="M5 1v4M10 1v4M15 1v4M20 1v4M5 21v4M10 21v4" /><rect x="15" y="13" width="12" height="12" fill="#fff" strokeDasharray="4 2" /><circle cx="21" cy="19" r="2" /></Ico>;
const WorkIcon = () => <Ico w={30} h={26}><path d="M2 10l6-8h14v22M2 24V10h12v14M8 4v20M2 16h20" /><path d="M8 12v12M13 12v12" stroke={ORANGE} /><circle cx="24" cy="8" r="5" fill="#f7bd62" stroke="#e09a3a" /><path d="M24 14v9" strokeWidth="4" /></Ico>;
const LockDim = () => <Ico w={30} h={26}><path d="M2 1v24M27 1v9M2 6h25" /><path d="M2 20h13" strokeDasharray="3 3" /><rect x="17" y="16" width="10" height="8" fill="#8a8d91" /><path d="M19 15v-4h6v4" /></Ico>;
const Grip = () => <svg width="15" height="17" aria-hidden="true"><path d="M11 0h4v4h-4zM5 7h4v4H5zM11 7h4v4h-4zM0 13h4v4H0zM5 13h4v4H5zM11 13h4v4h-4z" fill="#c4c4c4" /></svg>;

const ViewsIcon = () => <Ico w={26} h={26}><path d="M7 1H1v6M19 1h6v6M7 25H1v-6M19 25h6v-6" strokeWidth="3" /><path d="M7 10l4-4h8v10l-4 4H7z" fill="#f2f2f2" /></Ico>;
const PlanIcon = () => <Ico w={28} h={28} c="#77797c"><rect x="1" y="1" width="26" height="26" strokeDasharray="6 3" /><rect x="5" y="5" width="18" height="18" fill="#f2f2ef" /></Ico>;
const LegendIcon = () => <Ico w={28} h={28}><rect x="1" y="1" width="26" height="26" fill="#e6e6e6" /><path d="M1 4h26" strokeWidth="5" stroke="#777" /><rect x="5" y="10" width="5" height="5" fill="#888" /><circle cx="7" cy="21" r="2" fill="#888" /><path d="M13 11h11M13 15h11M13 19h11M13 23h11" strokeDasharray="6 2" strokeWidth="1" /></Ico>;
const ScheduleIcon = () => <Ico w={28} h={24}><rect x="1" y="2" width="25" height="20" fill="#f4f4f4" /><path d="M1 4h25" strokeWidth="4" /><path d="M1 10h25M1 16h25M6 4v18M12 4v18" stroke="#999" /></Ico>;
const SheetIcon = () => <Ico w={28} h={24}><path d="M1 1h19l7 7v15H1z" fill="#f4f4f4" /><path d="M20 1v7h7" /><path d="M5 19V7h11v12h-6v-6H5M23 13v7" stroke="#888" /></Ico>;
const FamilyIcon = () => <Ico w={26} h={26}><path d="M1 1h11v11H1z" fill="#f4f4f4" /><path d="M16 1h8v24H1v-9h15z" fill="#eee" /></Ico>;
const GroupIcon = () => <Ico w={26} h={26}><path d="M6 1H1v24h5M20 1h5v24h-5" /><path d="M12 10h8v8l-3 3h-6z" fill="#ccc" /><circle cx="11" cy="10" r="6" fill="#ccc" /></Ico>;
const ChainIcon = () => <Ico w={28} h={14} c="#c97c28" s={3}><rect x="2" y="2" width="13" height="10" rx="5" fill="#f6c47e" /><rect x="13" y="2" width="13" height="10" rx="5" fill="#f6c47e" /><path d="M8 7h12" /></Ico>;

/* ---------- tree guides ---------- */
type Guide = ' ' | '|' | 'T' | 'L' | '-' | '+';
const GuideCell = ({ g, first, last }: { g: Guide; first?: boolean; last?: boolean }) => {
  const box = g === '-' || g === '+';
  return (
    <svg width="35" height="32" viewBox="0 0 35 32" fill="none" aria-hidden="true">
      <g stroke="#a9abad" strokeWidth="2" strokeDasharray="2 2">
        {g !== ' ' && !first && <path d="M15 0v19" />}
        {(g === '|' || g === 'T' || (box && !last)) && <path d="M15 20v12" />}
        {(g === 'T' || g === 'L' || box) && <path d="M16 19h18" />}
      </g>
      {box && <rect x="8" y="12" width="14" height="14" rx="1" fill="#f4f4f4" stroke="#8d9094" strokeWidth="2" />}
      {box && <path d={g === '+' ? 'M11 19h8M15 15v8' : 'M11 19h8'} stroke={BLUE} strokeWidth="2" />}
    </svg>
  );
};
type Node = { guides: Guide[]; text: string; icon?: React.ReactNode; sel?: boolean; bold?: boolean; first?: boolean; last?: boolean };
const plan = (text: string, mid: Guide, end: Guide, bold?: boolean): Node => ({ guides: ['|', mid, end], text, icon: <PlanIcon />, bold });
const TREE: Node[] = [
  { guides: ['-'], text: 'Views (all)', icon: <ViewsIcon />, sel: true, first: true },
  { guides: ['|', '-'], text: 'Floor Plans' },
  plan('Level 1', '|', 'T', true),
  plan('Level 2', '|', 'T'),
  plan('Site', '|', 'L'),
  { guides: ['|', '-'], text: 'Ceiling Plans' },
  plan('Level 1', '|', 'T'),
  plan('Level 2', '|', 'L'),
  { guides: ['|', '-'], text: 'Elevations (Building Elevation)', last: true },
  plan('East', ' ', 'T'),
  plan('North', ' ', 'T'),
  plan('South', ' ', 'T'),
  plan('West', ' ', 'L'),
  { guides: ['T'], text: 'Legends', icon: <LegendIcon /> },
  { guides: ['T'], text: 'Schedules/Quantities (all)', icon: <ScheduleIcon /> },
  { guides: ['T'], text: 'Sheets (all)', icon: <SheetIcon /> },
  { guides: ['+'], text: 'Families', icon: <FamilyIcon /> },
  { guides: ['+'], text: 'Groups', icon: <GroupIcon /> },
  { guides: ['L'], text: 'Revit Links', icon: <ChainIcon /> },
];

type Prop = { name: string; value?: string; off?: boolean; edit?: boolean };
const PROPS: { group: string; rows: Prop[] }[] = [
  { group: 'Constraints', rows: [{ name: 'Schedule Level', edit: true }, { name: 'Elevation from ...', value: '0\'\u00a0 0"', off: true }, { name: 'Host', value: '<not associated>', off: true }] },
  { group: 'Identity Data', rows: [{ name: 'Image' }, { name: 'Comments' }, { name: 'Mark', off: true }] },
  { group: 'IFC Parameters', rows: [{ name: 'IFC Predefined ...' }, { name: 'Export to IFC As' }, { name: 'Export to IFC', value: 'By Type' }, { name: 'IfcGUID', value: '0BfYg$FMXCv8a...' }] },
];

const RibbonPanel = ({ w, title, pad, tab, arrow, children }: { w: number; title: string; pad?: number; tab?: boolean; arrow?: boolean; children: React.ReactNode }) => (
  <PanelBox $w={w} $tab={tab}>
    <PanelBody $pad={pad}>{children}</PanelBody>
    <PanelTitle>{title}{arrow && <Tri w={13} />}</PanelTitle>
  </PanelBox>
);
const Tool = ({ label, w, h, children }: { label: string; w?: number; h?: number; children: React.ReactNode }) => (
  <Small aria-label={label} $h={h}><SmallIcon $w={w}>{children}</SmallIcon></Small>
);

const RibbonBar = () => (
  <Ribbon>
    <RibbonPanel w={96} title="Select" arrow>
      <BigButton $w={94}><BigIcon><Ico w={24} h={38}><Cursor x={1} y={1} /></Ico></BigIcon>Modify</BigButton>
    </RibbonPanel>
    <RibbonPanel w={112} title="Properties">
      <Col $w={112}><Tile aria-label="Type properties"><TypePropsIcon /></Tile><Tile $on aria-label="Properties palette"><PropsIcon /></Tile></Col>
    </RibbonPanel>
    <RibbonPanel w={140} title="Clipboard">
      <BigButton $w={98} $off><BigIcon><PasteIcon /></BigIcon><BigText>Paste</BigText><Tri c="#9b9da0" w={8} /></BigButton>
      <Col><Tool label="Cut" w={34}><CutIcon /></Tool><Tool label="Copy" w={34}><CopyIcon /></Tool><Tool label="Match type" w={34}><MatchIcon /></Tool></Col>
    </RibbonPanel>
    <RibbonPanel w={243} title="Geometry" pad={12}>
      <Col $w={124}>
        <Small><SmallIcon><CopeIcon /></SmallIcon><SmallText>Cope</SmallText><Tri w={8} /></Small>
        <Small><SmallIcon><CutGeoIcon /></SmallIcon><SmallText>Cut</SmallText><Tri w={8} /></Small>
        <Small><SmallIcon><JoinGeoIcon /></SmallIcon><SmallText>Join</SmallText><Tri w={8} /></Small>
      </Col>
      <Col $w={45}><Tool label="Join roof"><JoinFaded /></Tool><Tool label="Wall joins"><WallJoin /></Tool><Tool label="Beam joins"><EditJoin /></Tool></Col>
      <Col>
        <Tool label="Split face"><FaceIcon /></Tool>
        <Small aria-label="Paint"><SmallIcon><SplitFace /></SmallIcon><Tri w={8} /></Small>
        <Tool label="Demolish"><Hammer /></Tool>
      </Col>
    </RibbonPanel>
    <RibbonPanel w={98} title="Controls"><BigButton $w={98}><BigIcon><ActivateIcon /></BigIcon>Activate</BigButton></RibbonPanel>
    <RibbonPanel w={416} title="Modify" pad={4}>
      <Col><Tool label="Align" w={69} h={63}><AlignIcon /></Tool><Tool label="Move" w={69} h={63}><MoveIcon /></Tool></Col>
      <Col><Tool label="Offset" w={69} h={63}><OffsetIcon /></Tool><Tool label="Copy" w={69} h={63}><CopyTool /></Tool></Col>
      <Col><Tool label="Mirror pick axis" w={69} h={63}><MirrorPick /></Tool><Tool label="Rotate" w={69} h={63}><RotateIcon /></Tool></Col>
      <Col><Tool label="Mirror draw axis" w={69} h={63}><MirrorPick pencil /></Tool><Tool label="Trim corner" w={69} h={63}><TrimIcon /></Tool></Col>
      <Col><Tool label="Split" w={44}><SplitIcon /></Tool><Tool label="Array" w={44}><ArrayIcon /></Tool><Tool label="Trim single" w={44}><TrimOne /></Tool></Col>
      <Col><Tool label="Split with gap" w={44}><SplitIcon gap /></Tool><Tool label="Scale" w={44}><ScaleIcon /></Tool><Tool label="Trim multiple" w={44}><TrimOne two /></Tool></Col>
      <Col><Tool label="Unpin" w={44}><PinFaded x /></Tool><Tool label="Pin" w={44}><PinFaded /></Tool><Tool label="Delete" w={44}><DeleteIcon /></Tool></Col>
    </RibbonPanel>
    <RibbonPanel w={114} title="View" pad={13}>
      <Col $w={61}>
        <Small aria-label="Hide"><SmallIcon><Bulb /></SmallIcon><Tri w={8} /></Small>
        <Small aria-label="Override"><SmallIcon><BrushFaded /></SmallIcon><Tri w={8} /></Small>
        <Tool label="Selection box"><SectionBox /></Tool>
      </Col>
      <Col><Tool label="Displace"><HideBox /></Tool><Tool label="Linework"><LinesIcon /></Tool></Col>
    </RibbonPanel>
    <RibbonPanel w={98} title="Measure" pad={12}>
      <Col>
        <Small $h={63} aria-label="Measure"><SmallIcon $w={60}><MeasureIcon /></SmallIcon><Tri w={8} /></Small>
        <Small $h={63} aria-label="Dimension"><SmallIcon $w={60}><AlignedDim /></SmallIcon><Tri w={8} /></Small>
      </Col>
    </RibbonPanel>
    <RibbonPanel w={143} title="Create" pad={5}>
      <Col><Tool label="Create assembly" w={66} h={63}><CreateGroup /></Tool><Tool label="Create parts" w={66} h={63}><AssemblyIcon /></Tool></Col>
      <Col><Tool label="Create group" w={66} h={63}><CreateSimilar /></Tool><Tool label="Create similar" w={66} h={63}><PartsIcon /></Tool></Col>
    </RibbonPanel>
    <RibbonPanel w={166} title="Mode" tab>
      <BigButton $w={80}><BigIcon><LoadIcon /></BigIcon>Load<br />Family</BigButton>
      <BigButton $w={80}><BigIcon><InPlaceIcon /></BigIcon>Model<br />In-place</BigButton>
    </RibbonPanel>
    <RibbonPanel w={335} title="Placement" tab>
      <Choices>
        <Choice $w={124}><ChoiceIcon><VertFace /></ChoiceIcon>Place on<br />Vertical Face</Choice>
        <Choice $w={90} $on><ChoiceIcon><OnFace /></ChoiceIcon>Place on<br />Face</Choice>
        <Choice $w={115}><ChoiceIcon><OnPlane /></ChoiceIcon>Place on<br />Work Plane</Choice>
      </Choices>
    </RibbonPanel>
  </Ribbon>
);

const PropertiesPalette = () => (
  <Props>
    <DockTitle>Properties<button aria-label="Close properties"><Close /></button></DockTitle>
    <TypePicker><Thumb><BeamPreview /></Thumb><TypeName>Family1</TypeName><Tri w={13} /></TypePicker>
    <FilterRow>
      <SelectWrap><select aria-label="Filter"><option>New Casework</option></select><ThinChevron /></SelectWrap>
      <EditType><EditTypeIcon />Edit Type</EditType>
    </FilterRow>
    <GridArea>
      <PropTable>
        <colgroup><col width="178" /><col width="177" /><col width="21" /></colgroup>
        {PROPS.map(g => (
          <tbody key={g.group}>
            <tr><GroupHead colSpan={3}><HeadRow>{g.group}<DoubleUp /></HeadRow></GroupHead></tr>
            {g.rows.map(r => (
              <PropRow key={r.name}>
                <Cell $label $off={r.off}>{r.name}</Cell>
                {r.edit ? <EditCell><input aria-label={r.name} /></EditCell> : <Cell $off={r.off}>{r.value}</Cell>}
                <Cell />
              </PropRow>
            ))}
          </tbody>
        ))}
      </PropTable>
    </GridArea>
    <PropsFoot><Link href="#help">Properties help</Link><Apply disabled>Apply</Apply></PropsFoot>
  </Props>
);

const Model = () => (
  <Drawing width="100%" height="100%" fill="none" stroke="#1c1c1c" strokeWidth="2" aria-label="Floor plan">
    <g transform="translate(-383 -248)">
      <path d="M1364 332l141 38 38 141-102 104-144-39-37-139z" />
      <path d="M1445 814l101 106-39 140-142 35-102-105 40-140z" />
      <path d="M1179 1003l103 184-185 102-103-184z" />
      <rect x="929" y="615" width="221" height="10" stroke="#6f7275" fill="#fdfdfd" />
      <rect x="909" y="508" width="212" height="212" stroke="#2e7cc6" strokeWidth="4" />
      <path d="M1153 538h40M1173 518v40" stroke="#333" strokeWidth="3" />
      <circle cx="1173" cy="538" r="4" fill="#fdfdfd" stroke="#333" />
      <path d="M2034 366l28 31-32 27-29-1-2-14 3-13zM2002 396l28 28" />
      <path d="M2032 396h2" stroke="#888" />
      <path d="M885 1373l-7-8 33-25h14v1h16v9l-2 21-28-31M930 1351h2M906 1372h3" />
    </g>
  </Drawing>
);

const DocumentArea = () => (
  <Doc>
    <Tabs>
      <Tab $on><ViewIcon /><span>Level 1</span><Close /></Tab>
      <Tab><ViewIcon c="#94969a" /><span>Ref. Level</span></Tab>
      <TabMenu aria-label="Tab list"><Ico w={16} h={14}><path d="M1 2h14" strokeWidth="3" /><path d="M1 6h14l-7 8z" fill={INK} stroke="none" /></Ico></TabMenu>
    </Tabs>
    <Stage>
      <Canvas>
        <Model />
        <LocationPanel>
          <Small $h={45}><Globe kind="pin" />Location</Small>
          <Small><Axes /><SmallText>Coordinates</SmallText><Tri w={8} /></Small>
          <Small><Globe kind="page" /><SmallText>Position</SmallText><Tri w={8} /></Small>
          <LocationTitle>Project Location</LocationTitle>
        </LocationPanel>
        <NavBar>
          <NavEnd aria-label="Close"><Dot x /></NavEnd>
          <button aria-label="Steering wheel"><Wheel /></button>
          <Tri c="#a9abad" />
          <NavRule />
          <button aria-label="Zoom"><ZoomIcon /></button>
          <Tri c="#a9abad" />
          <NavEnd aria-label="Customize"><Dot /></NavEnd>
        </NavBar>
      </Canvas>
      <VScroll><Chevron d="u" /><VThumb /><Chevron d="d" /></VScroll>
    </Stage>
    <ViewBar>
      <Scale>1/8" = 1'-0"</Scale>
      <ViewTool $wide aria-label="Detail level"><BoxIcon /></ViewTool>
      <ViewTool $wide aria-label="Visual style"><CubeIcon /></ViewTool>
      <ViewTool aria-label="Sun path"><SunIcon /></ViewTool>
      <ViewTool aria-label="Shadows"><ShadowIcon /></ViewTool>
      <ViewTool aria-label="Crop"><CropIcon /></ViewTool>
      <ViewTool aria-label="Crop region"><CropIcon bulb /></ViewTool>
      <ViewTool aria-label="Hide"><Glasses /></ViewTool>
      <ViewTool $wide aria-label="Reveal"><BlueBulb /></ViewTool>
      <ViewTool $wide aria-label="Temporary"><TempIcon /></ViewTool>
      <ViewTool $wide aria-label="Worksharing"><WorkIcon /></ViewTool>
      <ViewTool $wide aria-label="Reveal constraints"><LockDim /></ViewTool>
      <ViewTool aria-label="Scroll left"><Chevron d="l" /></ViewTool>
      <HTrack><HThumb /></HTrack>
      <Chevron d="r" />
      <Corner><Grip /></Corner>
    </ViewBar>
  </Doc>
);

const ProjectBrowser = () => (
  <Browser>
    <BrowserTitle>Project Browser - Project2</BrowserTitle>
    <Tree>
      {TREE.map((n, i) => (
        <TreeRow key={i}>
          {n.guides.map((g, j) => <GuideCell key={j} g={g} first={n.first} last={n.last && j === 1} />)}
          {n.icon && <TreeIcon>{n.icon}</TreeIcon>}
          <TreeText $sel={n.sel} $bold={n.bold}>{n.text}</TreeText>
        </TreeRow>
      ))}
    </Tree>
  </Browser>
);

const StatusBar = () => (
  <Status>
    <Hint>Click to place an instance on a face (Space Bar to Rotate)</Hint>
    <StatusItem $w={42} aria-label="Worksets"><Ico w={30} h={28}><path d="M9 12V2h12v10h-6" fill="#fff" stroke="#111" /><path d="M2 26V15l5-4 7 4v11z" fill="#9cc9ee" stroke={BLUE} /><path d="M21 13v5l3 3 4-3v-5M24 20v8" stroke="#3b5f8a" /></Ico></StatusItem>
    <Combo><select aria-label="Active workset"><option> </option></select><ThinChevron c="#c4c6c8" /></Combo>
    <StatusItem $w={109} $pad={18}><Ico w={30} h={28} c="#8f9194"><path d="M4 2h16v9h-8v6" fill="#fff" /><path d="M4 27l5-9 11-6" strokeWidth="3" /></Ico>:0</StatusItem>
    <StatusItem $w={46} aria-label="Design options"><Ico w={28} h={28}><path d="M1 27V2h26v25" fill="#f2f2f2" /><path d="M1 3h26" strokeWidth="5" /><rect x="4" y="11" width="5" height="5" /><path d="M12 13h12M8 20h3M14 20h10M10 26h14" /></Ico></StatusItem>
    <StatusItem $w={40} aria-label="Add to set"><Ico w={26} h={28} c="#fff"><rect x="0" y="0" width="26" height="28" fill="#9b9da0" stroke="none" /><path d="M3 1v3M0 22h8v-6l6 5v5" /></Ico></StatusItem>
    <Combo><select aria-label="Design option"><option>Main Model</option></select><ThinChevron c="#c4c6c8" /></Combo>
    <RightTools>
      <StatusItem $w={46} aria-label="Select links"><Ico w={30} h={28} c="#c97c28" s={3}><rect x="2" y="4" width="13" height="11" rx="5" fill="#f3b668" /><rect x="14" y="4" width="13" height="11" rx="5" fill="#f3b668" /><Cursor x={11} y={9} k={0.7} /></Ico></StatusItem>
      <StatusItem $w={46} aria-label="Select underlay"><Ico w={30} h={28} c={BLUE}><path d="M15 2v14H1zM1 24h14" fill="#fff" /><Cross x={21} y={7} s={3} /><Cursor x={15} y={10} k={0.7} /></Ico></StatusItem>
      <StatusItem $w={46} aria-label="Select pinned"><Ico w={30} h={28}><Pin x={0} y={1} /><Cursor x={15} y={9} k={0.7} /></Ico></StatusItem>
      <StatusItem $w={46} aria-label="Select by face"><Ico w={30} h={28} c={BLUE}><path d="M2 7l14-5v26H2z" fill={SKY} /><Cursor x={13} y={9} k={0.7} /></Ico></StatusItem>
      <StatusItem $w={46} aria-label="Drag on selection"><Ico w={30} h={28} c="#111" s={2}><path d="M8 2v16M1 10h16M17 6v9" /><path d="M5 4l3-4 3 4zM5 16l3 4 3-4z" fill="#111" stroke="none" /><Cursor x={16} y={9} k={0.7} /></Ico></StatusItem>
      <StatusItem $w={37} aria-label="Background processes"><Ico w={28} h={28} c="#a8aaac" s={6}><circle cx="13" cy="14" r="9" strokeDasharray="5 2" /></Ico></StatusItem>
      <StatusItem $w={50}><Ico w={30} h={28} c="#55585c"><path d="M1 1h27v4L17 18v10h-5V18L1 5z" fill="#b9bbbd" /></Ico>:0</StatusItem>
    </RightTools>
  </Status>
);

export default function App() {
  return (
    <Page>
      <Global />
      <RibbonBar />
      <Options>
        <Mode>Modify | Place Component</Mode>
        <Rule />
        <Check><input type="checkbox" />Rotate after placement</Check>
      </Options>
      <Main>
        <PropertiesPalette />
        <Splitter />
        <DocumentArea />
        <Splitter />
        <ProjectBrowser />
      </Main>
      <StatusBar />
      <Strip />
    </Page>
  );
}
